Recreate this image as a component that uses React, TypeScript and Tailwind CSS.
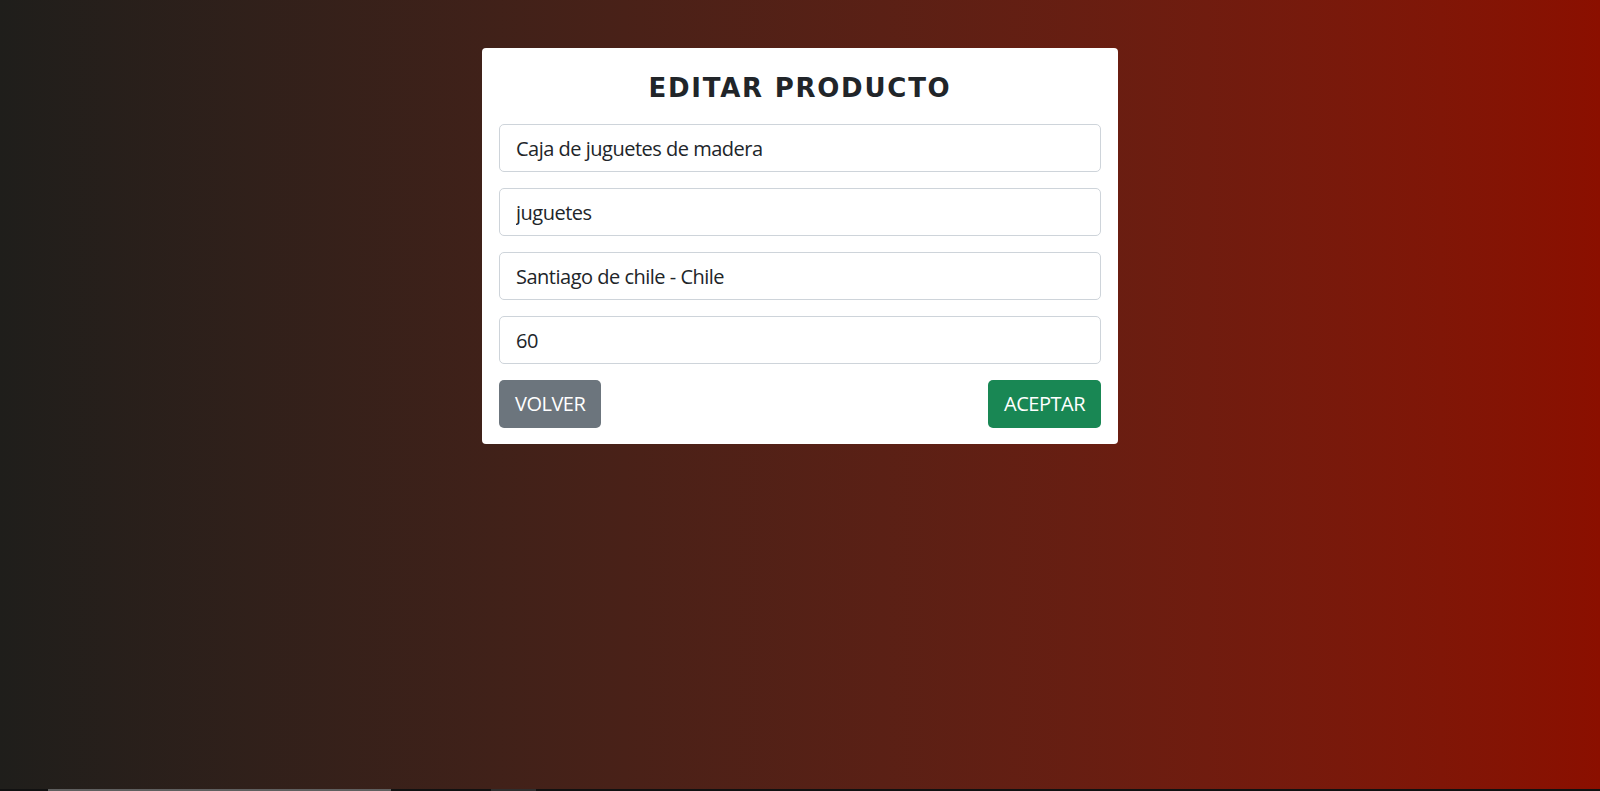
import type { ReactNode } from 'react';

const fields = ['Caja de juguetes de madera', 'juguetes', 'Santiago de chile - Chile', '60'];

const bodyFont = { fontFamily: '"Open Sans", "Liberation Sans", sans-serif' };

function Field({ value }: { value: string }) {
  return (
    <input
      type="text"
      defaultValue={value}
      style={bodyFont}
      className="block h-[48px] w-full rounded-[5px] border border-[#ced4da] bg-white px-4 text-[20px] tracking-[-0.5px] text-[#212529] outline-none"
    />
  );
}

function Button({ children, className }: { children: ReactNode; className: string }) {
  return (
    <button
      type="button"
      style={bodyFont}
      className={`h-[48px] rounded-[5px] px-4 text-[20px] tracking-[-0.5px] text-white ${className}`}
    >
      {children}
    </button>
  );
}

export default function App() {
  return (
    <div className="w-full">
      <div className="h-[789px] w-full bg-gradient-to-r from-[#1f1e1b] to-[#8b0f00] pt-[48px]">
        <div className="mx-auto w-[636px] rounded-[4px] bg-white px-[17px] pb-[16px] pt-[16px]">
          <h1
            className="mb-[18px] pt-[6px] text-center text-[26px] font-bold uppercase leading-[36px] tracking-[1.75px] text-[#212529]"
            style={{ fontFamily: '"DejaVu Sans", Inter, sans-serif' }}
          >
            Editar producto
          </h1>
          <div className="flex flex-col gap-4">
            {fields.map((value) => (
              <Field key={value} value={value} />
            ))}
            <div className="flex items-center justify-between">
              <Button className="bg-[#6c757d]">VOLVER</Button>
              <Button className="bg-[#198754]">ACEPTAR</Button>
            </div>
          </div>
        </div>
      </div>
      <div className="flex h-[2px] w-full bg-[#111111]">
        <div className="ml-[48px] h-full w-[343px] bg-[#5f5f5f]" />
        <div className="ml-[100px] h-full w-[45px] bg-[#2e2e2e]" />
      </div>
    </div>
  );
}
